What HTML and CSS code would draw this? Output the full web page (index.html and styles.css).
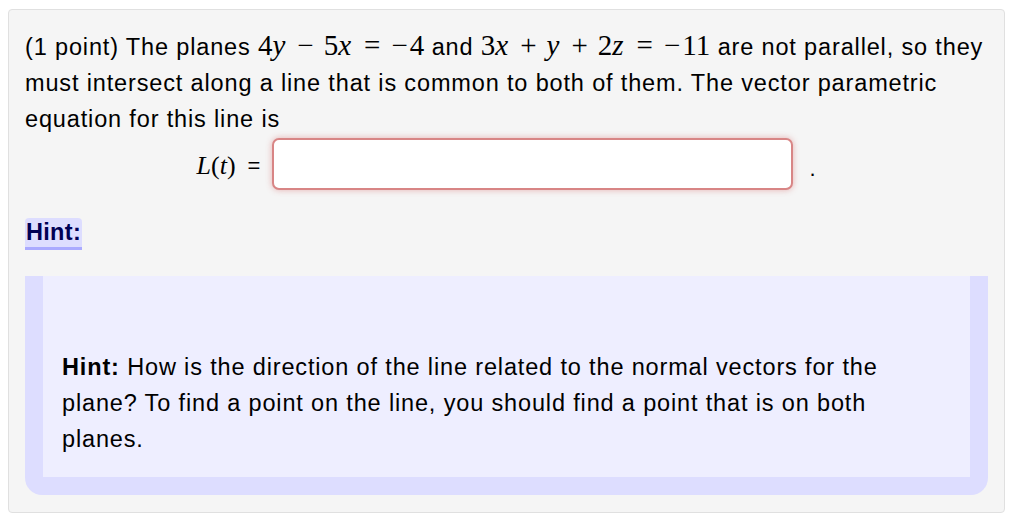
FILE: index.html
```html
<!DOCTYPE html>
<html>
<head>
<meta charset="utf-8">
<link rel="stylesheet" href="styles.css">
</head>
<body>
<div class="problem">
  <p class="text">(1 point) The planes <span class="m"><span class="n">4</span><i>y</i><span class="bo">−</span><span class="n">5</span><i>x</i><span class="rel">=</span><span class="un">−</span><span class="n">4</span></span> and <span class="m"><span class="n">3</span><i>x</i><span class="bo">+</span><i>y</i><span class="bo">+</span><span class="n">2</span><i>z</i><span class="rel">=</span><span class="un">−</span><span class="n">11</span></span> are not parallel, so they must intersect along a line that is common to both of them. The vector parametric equation for this line is</p>
  <div class="display">
    <span class="lhs"><i>L</i>(<i>t</i>)</span><span class="eq">=</span>
    <input class="answer" type="text">
    <span class="dot">.</span>
  </div>
  <div class="hint-head"><span class="hint-tab">Hint:</span></div>
  <div class="hint-box">
    <div class="hint-inner">
      <p class="hint-text"><b>Hint:</b> How is the direction of the line related to the normal vectors for the plane? To find a point on the line, you should find a point that is on both planes.</p>
    </div>
  </div>
</div>
</body>
</html>
```

FILE: styles.css
```css
html, body {
  margin: 0;
  padding: 0;
  background: #ffffff;
}
body {
  padding: 9px 0 0 8px;
  font-family: "Liberation Sans", Arial, Helvetica, sans-serif;
  font-size: 23.5px;
  letter-spacing: 0.85px;
  color: #000;
}
.problem {
  box-sizing: border-box;
  width: 997px;
  background: #f5f5f5;
  border: 1px solid #e0e0e0;
  border-radius: 4px;
  padding: 17px 16px 17px 16px;
}
.text {
  margin: 0;
  line-height: 36px;
}
.m {
  font-family: "Liberation Serif", "Times New Roman", serif;
  font-size: 29px;
  letter-spacing: 0;
  white-space: nowrap;
}
.m i {
  font-style: italic;
  padding-right: 2px;
}
.bo {
  padding: 0 10px;
}
.rel {
  padding: 0 11px;
}
.un {
  padding-right: 2px;
}
.display {
  display: flex;
  justify-content: center;
  align-items: center;
  height: 52px;
  margin-top: 1px;
}
.lhs {
  font-family: "Liberation Serif", "Times New Roman", serif;
  font-size: 26px;
  letter-spacing: 0;
  margin-top: 4px;
}
.eq {
  font-size: 22px;
  letter-spacing: 0;
  margin: 4px 12px 0 12px;
}
.answer {
  box-sizing: border-box;
  width: 521px;
  height: 52px;
  margin: 0;
  border: 2px solid #d88585;
  border-radius: 7px;
  background: #fff;
  box-shadow: 0 0 6px rgba(210, 90, 90, 0.45);
  outline: none;
}
.dot {
  margin: 10px 0 0 16px;
  font-size: 22px;
}
.hint-head {
  margin-top: 28px;
  height: 33px;
}
.hint-tab {
  display: inline-block;
  background: #ddddff;
  border-bottom: 3px solid #aaaaff;
  border-radius: 4px 4px 0 0;
  font-weight: bold;
  color: #000055;
  letter-spacing: 0.3px;
  line-height: 29px;
  height: 29px;
  padding: 0 1px;
}
.hint-box {
  margin-top: 25px;
  background: #ddddff;
  border-radius: 0 0 17px 17px;
  padding: 0 18px 18px 18px;
}
.hint-inner {
  background: #eeeeff;
  padding: 73px 19px 20px 19px;
}
.hint-text {
  margin: 0;
  line-height: 36px;
}
```
